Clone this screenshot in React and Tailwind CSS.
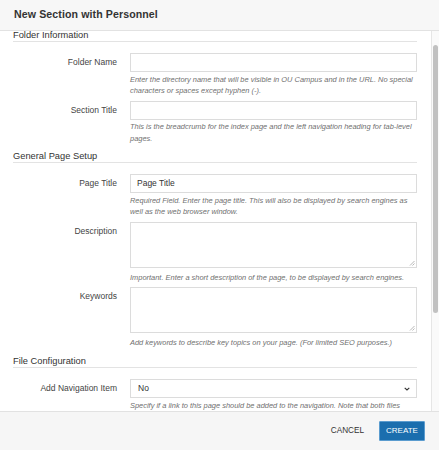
import React from "react";

const font = { fontFamily: '"Liberation Sans", Arial, sans-serif' };

function Heading({ children }) {
  return (
    <div className="mr-[14px] border-b border-[#e3e3e3] text-[9.3px] leading-[12px] text-[#333]">
      {children}
    </div>
  );
}

function Field({ label, help, children }) {
  return (
    <div className="flex mr-[14px]">
      <div className="w-[104px] shrink-0 text-right text-[8.5px] leading-[19px] text-[#444]">{label}</div>
      <div className="ml-[13px] flex-1">
        {children}
        {help && (
          <p className="mt-[1.5px] text-[7.45px] leading-[11.5px] italic text-[#6f6f6f]">{help}</p>
        )}
      </div>
    </div>
  );
}

function Input({ value = "" }) {
  return (
    <div className="h-[19px] border border-[#dcdcdc] bg-white px-[6px] text-[8.5px] leading-[17px] text-[#333]">
      {value}
    </div>
  );
}

function Area() {
  return (
    <div className="relative h-[46px] mb-[4px] border border-[#dcdcdc] bg-white">
      <svg className="absolute bottom-[1px] right-[1px]" width="6" height="6" viewBox="0 0 6 6">
        <path d="M5.5 1 L1 5.5 M5.5 3.5 L3.5 5.5" stroke="#999" strokeWidth="0.7" />
      </svg>
    </div>
  );
}

export default function App() {
  return (
    <div className="w-[439px] h-[450px] bg-white flex flex-col overflow-hidden" style={font}>
      <div className="h-[31px] shrink-0 bg-[#f7f7f7] border-b border-[#e2e2e2] flex items-center pl-[14px]">
        <h1 className="text-[10.6px] font-bold text-[#333] tracking-[0.1px]">New Section with Personnel</h1>
      </div>

      <div className="flex flex-1 min-h-0">
        <div className="flex-1 overflow-hidden pl-[13px]">
          <div className="-mt-[2px]">
            <Heading>Folder Information</Heading>
            <div className="mt-[11px] flex flex-col gap-[4px]">
              <Field
                label="Folder Name"
                help="Enter the directory name that will be visible in OU Campus and in the URL. No special characters or spaces except hyphen (-)."
              >
                <Input />
              </Field>
              <Field
                label="Section Title"
                help="This is the breadcrumb for the index page and the left navigation heading for tab-level pages."
              >
                <Input />
              </Field>
            </div>

            <div className="mt-[6px]">
              <Heading>General Page Setup</Heading>
            </div>
            <div className="mt-[11px] flex flex-col gap-[4px]">
              <Field
                label="Page Title"
                help="Required Field. Enter the page title. This will also be displayed by search engines as well as the web browser window."
              >
                <Input value="Page Title" />
              </Field>
              <Field
                label="Description"
                help="Important. Enter a short description of the page, to be displayed by search engines."
              >
                <Area />
              </Field>
              <Field
                label="Keywords"
                help="Add keywords to describe key topics on your page. (For limited SEO purposes.)"
              >
                <Area />
              </Field>
            </div>

            <div className="mt-[6px]">
              <Heading>File Configuration</Heading>
            </div>
            <div className="mt-[11.5px] flex flex-col gap-[4px]">
              <Field
                label="Add Navigation Item"
                help="Specify if a link to this page should be added to the navigation. Note that both files must be published."
              >
                <div className="h-[19px] border border-[#dcdcdc] bg-white pl-[7px] pr-[6px] flex items-center justify-between text-[8.5px] text-[#333]">
                  <span>No</span>
                  <svg width="6" height="4" viewBox="0 0 6 4">
                    <path d="M0.7 0.8 L3 3 L5.3 0.8" fill="none" stroke="#333" strokeWidth="1.1" />
                  </svg>
                </div>
              </Field>
            </div>
          </div>
        </div>

        <div className="w-[8px] shrink-0 border-l border-[#e6e6e6] bg-[#fafafa] pt-[14px]">
          <div className="ml-[1px] w-[5px] h-[268px] rounded-full bg-[#c1c1c1]" />
        </div>
      </div>

      <div className="h-[39px] shrink-0 bg-[#f6f6f6] border-t border-[#e2e2e2] flex items-center justify-end pr-[14px] gap-[15px]">
        <button className="text-[8.2px] text-[#333]">CANCEL</button>
        <button className="h-[20px] w-[46px] bg-[#1b6eae] text-white text-[8px] rounded-[1px] border border-[#5b9ccf]">
          CREATE
        </button>
      </div>
    </div>
  );
}
